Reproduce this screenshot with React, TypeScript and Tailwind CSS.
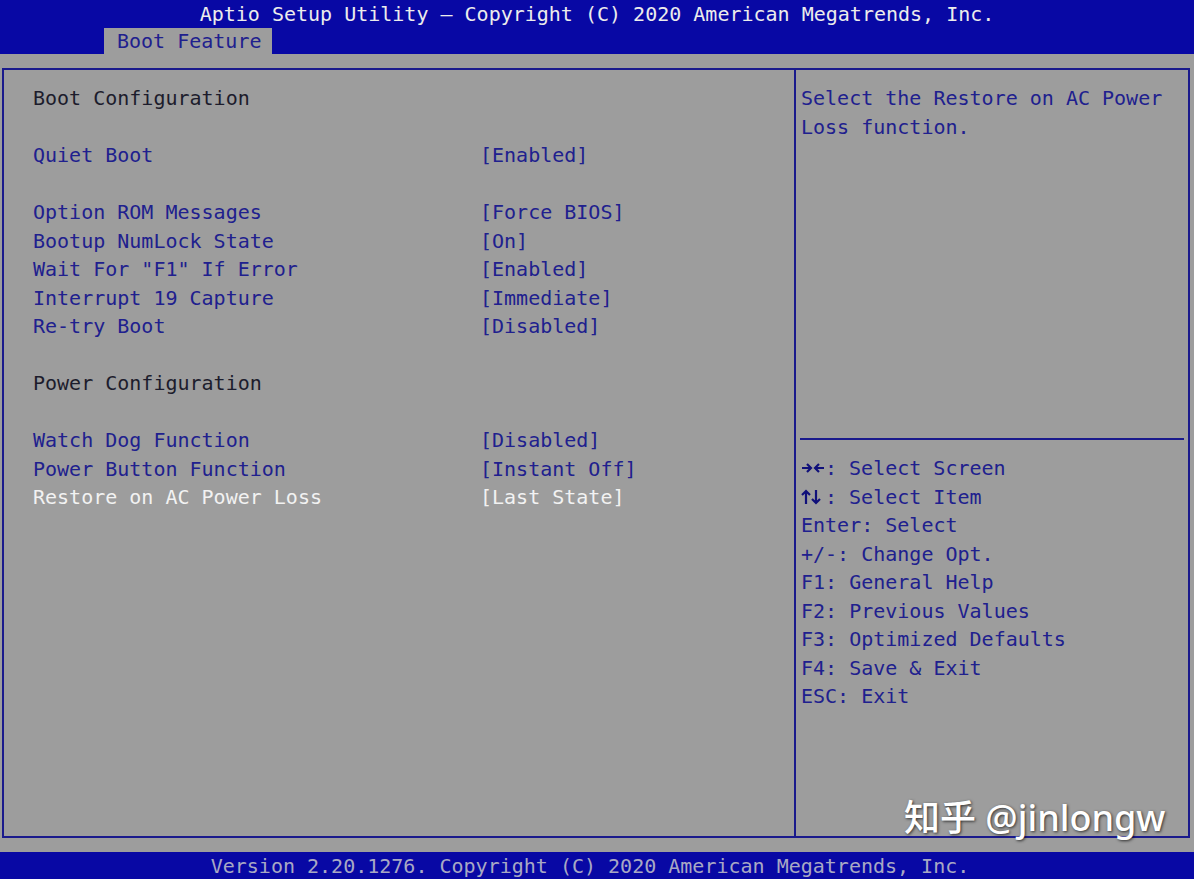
const mono = { fontFamily: '"DejaVu Sans Mono", "Liberation Mono", monospace' }

const items: { label?: string; value?: string; kind?: 'head' | 'item' | 'active' }[] = [
  { label: 'Boot Configuration', kind: 'head' },
  {},
  { label: 'Quiet Boot', value: '[Enabled]', kind: 'item' },
  {},
  { label: 'Option ROM Messages', value: '[Force BIOS]', kind: 'item' },
  { label: 'Bootup NumLock State', value: '[On]', kind: 'item' },
  { label: 'Wait For "F1" If Error', value: '[Enabled]', kind: 'item' },
  { label: 'Interrupt 19 Capture', value: '[Immediate]', kind: 'item' },
  { label: 'Re-try Boot', value: '[Disabled]', kind: 'item' },
  {},
  { label: 'Power Configuration', kind: 'head' },
  {},
  { label: 'Watch Dog Function', value: '[Disabled]', kind: 'item' },
  { label: 'Power Button Function', value: '[Instant Off]', kind: 'item' },
  { label: 'Restore on AC Power Loss', value: '[Last State]', kind: 'active' },
]

// arrow glyphs drawn as tiny svgs (bitmap font look)
function LeftRight() {
  return (
    <svg width="24" height="16" viewBox="0 0 24 16" className="text-[#10107a]">
      <path d="M1 8h9M6 4l4 4-4 4" stroke="currentColor" strokeWidth="2.2" fill="none" />
      <path d="M23 8h-9M18 4l-4 4 4 4" stroke="currentColor" strokeWidth="2.2" fill="none" />
    </svg>
  )
}

function UpDown() {
  return (
    <svg width="24" height="16" viewBox="0 0 24 16" className="text-[#10107a]">
      <path d="M5 15V2M1 6l4-4 4 4" stroke="currentColor" strokeWidth="2.2" fill="none" />
      <path d="M15 1v13M11 10l4 4 4-4" stroke="currentColor" strokeWidth="2.2" fill="none" />
    </svg>
  )
}

const keys: [string, string][] = [
  ['lr', ': Select Screen'],
  ['ud', ': Select Item'],
  ['', 'Enter: Select'],
  ['', '+/-: Change Opt.'],
  ['', 'F1: General Help'],
  ['', 'F2: Previous Values'],
  ['', 'F3: Optimized Defaults'],
  ['', 'F4: Save & Exit'],
  ['', 'ESC: Exit'],
]

function Row({ label, value, kind }: { label?: string; value?: string; kind?: string }) {
  const color =
    kind === 'head' ? 'text-[#1c1c2c]' : kind === 'active' ? 'text-[#f2f2f2]' : 'text-[#20208e]'
  return (
    <div className={`flex h-[28.5px] items-center whitespace-pre ${color}`}>
      <span className="w-[447px]">{label ?? ''}</span>
      <span>{value ?? ''}</span>
    </div>
  )
}

export default function App() {
  return (
    <div
      className="relative flex h-[879px] w-[1194px] flex-col overflow-hidden bg-[#9d9d9d] text-[20px] leading-none"
      style={mono}
    >
      {/* header */}
      <div className="flex h-[54px] flex-col bg-[#0808a4]">
        <div className="flex h-[28px] items-center justify-center whitespace-pre text-[#ececec]">
          Aptio Setup Utility – Copyright (C) 2020 American Megatrends, Inc.
        </div>
        <div className="flex flex-1 pl-[104px]">
          <div className="flex w-[168px] items-center bg-[#9d9d9d] pl-[13px] text-[#20208e]">
            Boot Feature
          </div>
        </div>
      </div>

      {/* body */}
      <div className="flex flex-1 flex-col px-[2px] pb-[14px] pr-[4px] pt-[14px]">
        <div className="flex flex-1 border-2 border-[#1a1a8c]">
          <div className="w-[792px] border-r-2 border-[#1a1a8c] pl-[29px] pt-[14px]">
            {items.map((it, i) => (
              <Row key={i} {...it} />
            ))}
          </div>
          <div className="flex flex-1 flex-col">
            <div className="h-[368px] pl-[5px] pt-[14px] text-[#20208e]">
              <div className="flex h-[28.5px] items-center whitespace-pre">Select the Restore on AC Power</div>
              <div className="flex h-[28.5px] items-center whitespace-pre">Loss function.</div>
            </div>
            <div className="mx-[4px] h-[2px] bg-[#1a1a8c]" />
            <div className="pl-[5px] pt-[14px] text-[#20208e]">
              {keys.map(([arrow, text], i) => (
                <div key={i} className="flex h-[28.5px] items-center whitespace-pre">
                  {arrow === 'lr' && <LeftRight />}
                  {arrow === 'ud' && <UpDown />}
                  <span>{text}</span>
                </div>
              ))}
            </div>
          </div>
        </div>
      </div>

      {/* footer */}
      <div className="flex h-[27px] items-center justify-center whitespace-pre bg-[#0808a4] pr-[14px] text-[#a8a8c4]">
        Version 2.20.1276. Copyright (C) 2020 American Megatrends, Inc.
      </div>

      {/* watermark */}
      <div
        className="absolute left-[904px] top-[800px] whitespace-pre text-[36px] font-medium text-white [text-shadow:1px_1px_3px_rgba(0,0,0,0.7)]"
        style={{ fontFamily: '"Noto Sans", "Noto Sans CJK SC", sans-serif' }}
      >
        知乎 @jinlongw
      </div>
    </div>
  )
}
